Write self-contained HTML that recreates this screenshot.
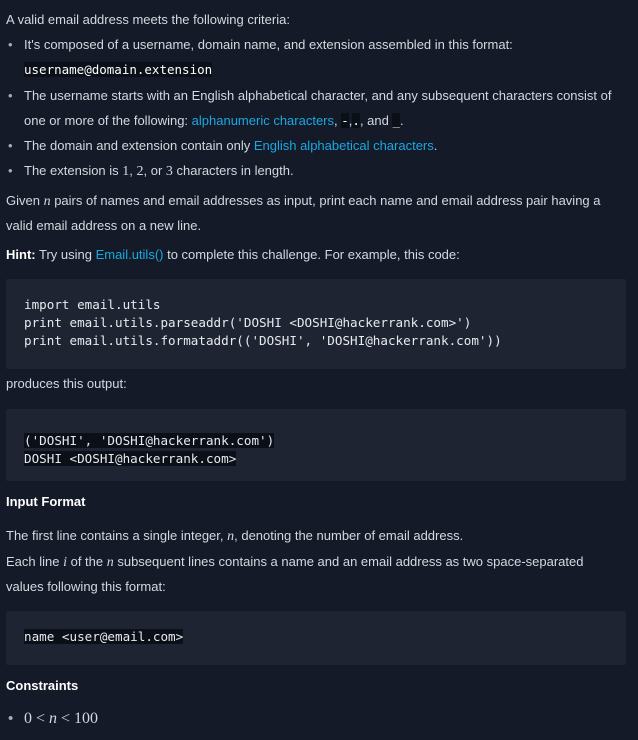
<!DOCTYPE html>
<html><head><meta charset="utf-8"><style>
body{margin:0;width:638px;height:740px;background:#141a28;color:#d4d8df;font-family:"Liberation Sans",sans-serif;font-size:13px;overflow:hidden;position:relative}
.l{position:absolute;left:6px;white-space:nowrap;line-height:16px;letter-spacing:0}
.b{left:24px}
.b::before{content:"•";position:absolute;left:-16px;color:#aab}
.nb::before{content:none}
a{color:#1ba8e0;text-decoration:none}
code{font-family:"DejaVu Sans Mono","Liberation Mono",monospace;font-size:12.5px;background:#0b0f18;color:#fff;letter-spacing:0}
.m{font-family:"Liberation Serif",serif;font-style:italic;font-size:14px}
.n{font-family:"Liberation Serif",serif;font-size:14px}
.blk{position:absolute;left:6px;width:620px;background:#1e2432;border-radius:2px}
pre{margin:0;position:absolute;left:18px;font-family:"DejaVu Sans Mono","Liberation Mono",monospace;font-size:12.6px;line-height:18px;color:#e8eaee}
h{font-weight:bold;color:#fff}
</style></head><body>
<div class="l" style="top:12px">A valid email address meets the following criteria:</div>
<div class="l b" style="top:37px">It's composed of a username, domain name, and extension assembled in this format:</div>
<div class="l b nb" style="top:62px"><code>username@domain.extension</code></div>
<div class="l b" style="top:88px">The username starts with an English alphabetical character, and any subsequent characters consist of</div>
<div class="l b nb" style="top:113px">one or more of the following: <a>alphanumeric characters</a>, <code>-</code>,<code>.</code>, and <code>_</code>.</div>
<div class="l b" style="top:138px">The domain and extension contain only <a>English alphabetical characters</a>.</div>
<div class="l b" style="top:163px">The extension is <span class="n">1</span>, <span class="n">2</span>, or <span class="n">3</span> characters in length.</div>
<div class="l" style="top:193px">Given <span class="m">n</span> pairs of names and email addresses as input, print each name and email address pair having a</div>
<div class="l" style="top:218px">valid email address on a new line.</div>
<div class="l" style="top:247px"><h>Hint:</h> Try using <a>Email.utils()</a> to complete this challenge. For example, this code:</div>
<div class="blk" style="top:279px;height:90px"><pre style="top:17px">import email.utils
print email.utils.parseaddr('DOSHI &lt;DOSHI@hackerrank.com&gt;')
print email.utils.formataddr(('DOSHI', 'DOSHI@hackerrank.com'))</pre></div>
<div class="l" style="top:376px">produces this output:</div>
<div class="blk" style="top:409px;height:72px"><pre style="top:23px"><span style="background:#0b0f18">('DOSHI', 'DOSHI@hackerrank.com')</span>
<span style="background:#0b0f18">DOSHI &lt;DOSHI@hackerrank.com&gt;</span></pre></div>
<div class="l" style="top:494px"><h>Input Format</h></div>
<div class="l" style="top:528px">The first line contains a single integer, <span class="m">n</span>, denoting the number of email address.</div>
<div class="l" style="top:554px">Each line <span class="m">i</span> of the <span class="m">n</span> subsequent lines contains a name and an email address as two space-separated</div>
<div class="l" style="top:579px">values following this format:</div>
<div class="blk" style="top:611px;height:54px"><pre style="top:17px"><span style="background:#0b0f18">name &lt;user@email.com&gt;</span></pre></div>
<div class="l" style="top:678px"><h>Constraints</h></div>
<div class="l b" style="top:711px;font-size:15px"><span class="n" style="font-size:16px">0 &lt; <i>n</i> &lt; 100</span></div>
</body></html>
